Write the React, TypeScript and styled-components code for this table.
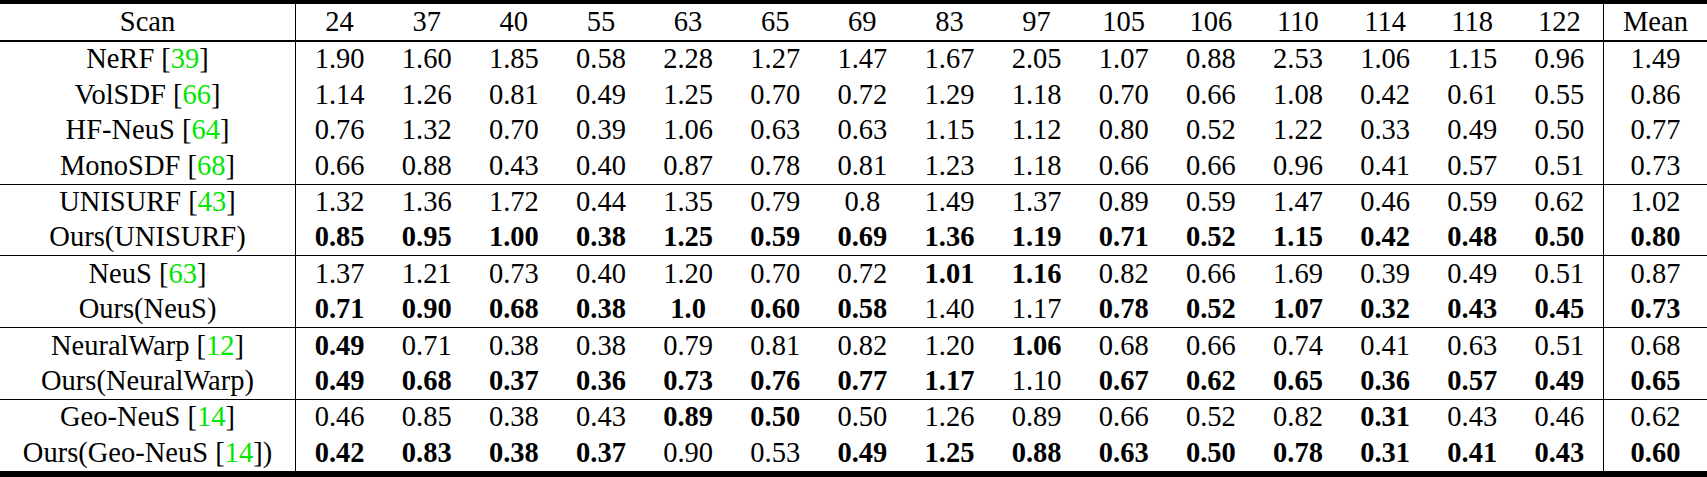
import styled, {createGlobalStyle} from 'styled-components';

const GlobalStyle = createGlobalStyle`
    html, body {
        margin: 0;
        padding: 0;
        background: #fff;
    }
`;

const SCANS = ['24', '37', '40', '55', '63', '65', '69', '83', '97', '105', '106', '110', '114', '118', '122'];

// a value prefixed with * is bold (best in its pair)
interface RowType {
    name: string;
    cite?: string;
    after?: string;
    values: string[];
}

const GROUPS: RowType[][] = [
    [
        {name: 'NeRF', cite: '39', values: ['1.90', '1.60', '1.85', '0.58', '2.28', '1.27', '1.47', '1.67', '2.05', '1.07', '0.88', '2.53', '1.06', '1.15', '0.96', '1.49']},
        {name: 'VolSDF', cite: '66', values: ['1.14', '1.26', '0.81', '0.49', '1.25', '0.70', '0.72', '1.29', '1.18', '0.70', '0.66', '1.08', '0.42', '0.61', '0.55', '0.86']},
        {name: 'HF-NeuS', cite: '64', values: ['0.76', '1.32', '0.70', '0.39', '1.06', '0.63', '0.63', '1.15', '1.12', '0.80', '0.52', '1.22', '0.33', '0.49', '0.50', '0.77']},
        {name: 'MonoSDF', cite: '68', values: ['0.66', '0.88', '0.43', '0.40', '0.87', '0.78', '0.81', '1.23', '1.18', '0.66', '0.66', '0.96', '0.41', '0.57', '0.51', '0.73']},
    ],
    [
        {name: 'UNISURF', cite: '43', values: ['1.32', '1.36', '1.72', '0.44', '1.35', '0.79', '0.8', '1.49', '1.37', '0.89', '0.59', '1.47', '0.46', '0.59', '0.62', '1.02']},
        {name: 'Ours(UNISURF)', values: ['*0.85', '*0.95', '*1.00', '*0.38', '*1.25', '*0.59', '*0.69', '*1.36', '*1.19', '*0.71', '*0.52', '*1.15', '*0.42', '*0.48', '*0.50', '*0.80']},
    ],
    [
        {name: 'NeuS', cite: '63', values: ['1.37', '1.21', '0.73', '0.40', '1.20', '0.70', '0.72', '*1.01', '*1.16', '0.82', '0.66', '1.69', '0.39', '0.49', '0.51', '0.87']},
        {name: 'Ours(NeuS)', values: ['*0.71', '*0.90', '*0.68', '*0.38', '*1.0', '*0.60', '*0.58', '1.40', '1.17', '*0.78', '*0.52', '*1.07', '*0.32', '*0.43', '*0.45', '*0.73']},
    ],
    [
        {name: 'NeuralWarp', cite: '12', values: ['*0.49', '0.71', '0.38', '0.38', '0.79', '0.81', '0.82', '1.20', '*1.06', '0.68', '0.66', '0.74', '0.41', '0.63', '0.51', '0.68']},
        {name: 'Ours(NeuralWarp)', values: ['*0.49', '*0.68', '*0.37', '*0.36', '*0.73', '*0.76', '*0.77', '*1.17', '1.10', '*0.67', '*0.62', '*0.65', '*0.36', '*0.57', '*0.49', '*0.65']},
    ],
    [
        {name: 'Geo-NeuS', cite: '14', values: ['0.46', '0.85', '0.38', '0.43', '*0.89', '*0.50', '0.50', '1.26', '0.89', '0.66', '0.52', '0.82', '*0.31', '0.43', '0.46', '0.62']},
        {name: 'Ours(Geo-NeuS', cite: '14', after: ')', values: ['*0.42', '*0.83', '*0.38', '*0.37', '0.90', '0.53', '*0.49', '*1.25', '*0.88', '*0.63', '*0.50', '*0.78', '*0.31', '*0.41', '*0.43', '*0.60']},
    ],
];

const Method = ({row}: {row: RowType}) => (
    <>
        {row.name}
        {row.cite && (
            <>
                {' ['}
                <Cite>{row.cite}</Cite>
                {']'}
            </>
        )}
        {row.after}
    </>
);

const App = () => {
    return (
        <>
            <GlobalStyle />
            <Table>
                <colgroup>
                    <col style={{width: 296}} />
                    {SCANS.map((s) => (
                        <col key={s} style={{width: 1307 / 15}} />
                    ))}
                    <col style={{width: 104}} />
                </colgroup>
                <thead>
                    <HeadRow>
                        <NameCell as="th">Scan</NameCell>
                        {SCANS.map((s) => (
                            <Cell as="th" key={s}>
                                {s}
                            </Cell>
                        ))}
                        <MeanCell as="th">Mean</MeanCell>
                    </HeadRow>
                </thead>
                {GROUPS.map((group, gi) => (
                    <tbody key={gi}>
                        {group.map((row, ri) => (
                            <Row key={row.name + ri} $rule={ri === 0}>
                                <NameCell>
                                    <Method row={row} />
                                </NameCell>
                                {row.values.map((v, vi) => {
                                    const bold = v.startsWith('*');
                                    const text = bold ? v.slice(1) : v;
                                    const last = vi === row.values.length - 1;
                                    return last ? (
                                        <MeanCell key={vi} $bold={bold}>
                                            {text}
                                        </MeanCell>
                                    ) : (
                                        <Cell key={vi} $bold={bold}>
                                            {text}
                                        </Cell>
                                    );
                                })}
                            </Row>
                        ))}
                    </tbody>
                ))}
            </Table>
        </>
    );
};

export default App;

const Table = styled.table`
    width: 1707px;
    table-layout: fixed;
    border-collapse: separate;
    border-spacing: 0;
    border-top: 4px solid #000;
    border-bottom: 8px solid #000;
    font-family: 'Liberation Serif', 'Times New Roman', serif;
    font-size: 28.5px;
    color: #000;
`;

const HeadRow = styled.tr`
    height: 37px;
    th {
        border-bottom: 1px solid #000;
        font-weight: 400;
    }
`;

const Row = styled.tr<{$rule: boolean}>`
    height: ${({$rule}) => ($rule ? '36.4px' : '35.4px')};
    td {
        border-top: ${({$rule}) => ($rule ? '1px solid #000' : 'none')};
    }
`;

const Cell = styled.td<{$bold?: boolean}>`
    padding: 0;
    text-align: center;
    vertical-align: middle;
    white-space: nowrap;
    line-height: 1;
    font-weight: ${({$bold}) => ($bold ? 700 : 400)};
`;

const NameCell = styled(Cell)`
    border-right: 1px solid #000;
`;

const MeanCell = styled(Cell)`
    border-left: 1px solid #000;
`;

const Cite = styled.span`
    color: #00e600;
`;
